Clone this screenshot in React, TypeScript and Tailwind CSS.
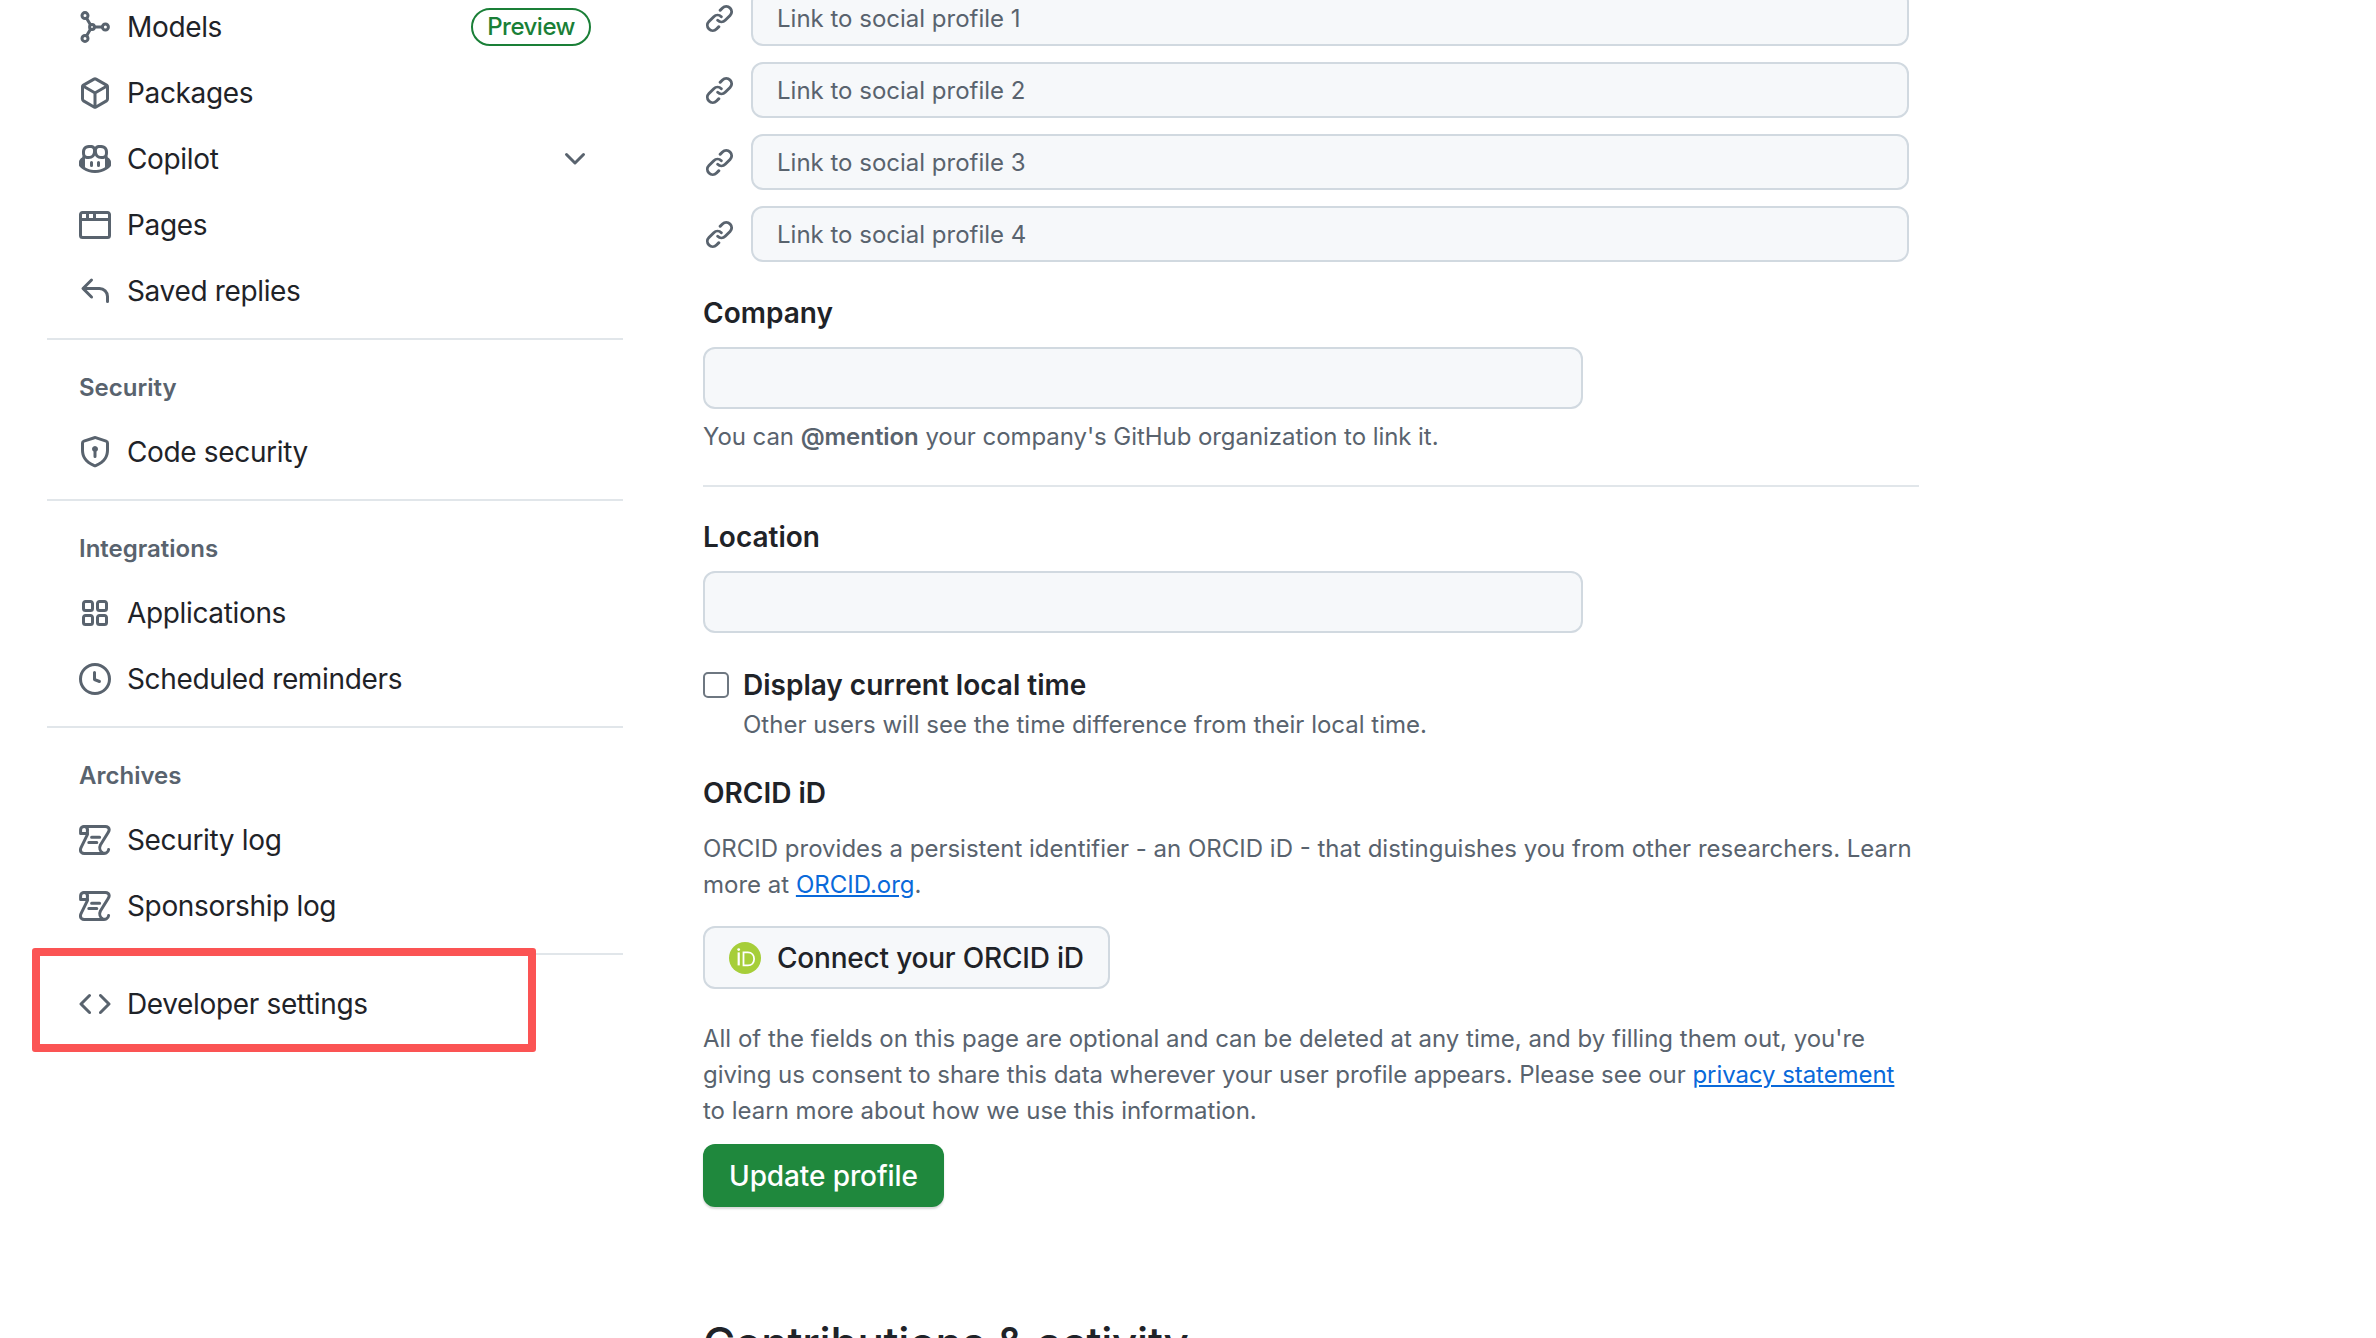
import type { ReactNode } from "react";

const d = {
  package: "m8.878.392 5.25 3.045c.54.314.872.89.872 1.514v6.098a1.75 1.75 0 0 1-.872 1.514l-5.25 3.045a1.75 1.75 0 0 1-1.756 0l-5.25-3.045A1.75 1.75 0 0 1 1 11.049V4.951c0-.624.332-1.201.872-1.514L7.122.392a1.75 1.75 0 0 1 1.756 0ZM7.875 1.69l-4.63 2.685L8 7.133l4.755-2.758-4.63-2.685a.248.248 0 0 0-.25 0ZM2.5 5.677v5.372c0 .09.047.171.125.216l4.625 2.683V8.432Zm6.25 8.271 4.625-2.683a.25.25 0 0 0 .125-.216V5.677L8.75 8.432Z",
  copilot: "M7.998 15.035c-4.562 0-7.873-2.914-7.998-3.749V9.338c.085-.628.677-1.686 1.588-2.065.013-.07.024-.143.036-.218.029-.183.06-.384.126-.612-.201-.508-.254-1.084-.254-1.656 0-.87.128-1.769.693-2.484.579-.733 1.494-1.124 2.724-1.261 1.206-.134 2.262.034 2.944.765.05.053.096.108.139.165.044-.057.094-.112.143-.165.682-.731 1.738-.899 2.944-.765 1.23.137 2.145.528 2.724 1.261.566.715.693 1.614.693 2.484 0 .572-.053 1.148-.254 1.656.066.228.098.429.126.612.012.076.024.148.037.218.924.385 1.522 1.471 1.591 2.095v1.872c0 .766-3.351 3.795-8.002 3.795Zm0-1.485c2.28 0 4.584-1.11 5.002-1.433V7.862l-.023-.116c-.49.21-1.075.291-1.727.291-1.146 0-2.059-.327-2.71-.991A3.222 3.222 0 0 1 8 6.303a3.24 3.24 0 0 1-.544.743c-.65.664-1.563.991-2.71.991-.652 0-1.236-.081-1.727-.291l-.023.116v4.255c.419.323 2.722 1.433 5.002 1.433ZM6.762 2.83c-.193-.206-.637-.413-1.682-.297-1.019.113-1.479.404-1.713.7-.247.312-.369.789-.369 1.554 0 .793.129 1.171.308 1.371.162.181.519.379 1.442.379.853 0 1.339-.235 1.638-.54.315-.322.527-.827.617-1.553.117-.935-.037-1.395-.241-1.614Zm4.155-.297c-1.044-.116-1.488.091-1.681.297-.204.219-.359.679-.242 1.614.091.726.303 1.231.618 1.553.299.305.784.54 1.638.54.922 0 1.28-.198 1.442-.379.179-.2.308-.578.308-1.371 0-.765-.123-1.242-.37-1.554-.233-.296-.693-.587-1.713-.7Z M6.25 9.037a.75.75 0 0 1 .75.75v1.501a.75.75 0 0 1-1.5 0V9.787a.75.75 0 0 1 .75-.75Zm4.25.75v1.501a.75.75 0 0 1-1.5 0V9.787a.75.75 0 0 1 1.5 0Z",
  browser: "M0 2.75C0 1.784.784 1 1.75 1h12.5c.966 0 1.75.784 1.75 1.75v10.5A1.75 1.75 0 0 1 14.25 15H1.75A1.75 1.75 0 0 1 0 13.25ZM14.5 6h-13v7.25c0 .138.112.25.25.25h12.5a.25.25 0 0 0 .25-.25Zm-6-3.5v2h6v-1.75a.25.25 0 0 0-.25-.25ZM5 2.5v2h2v-2Zm-3.25 0a.25.25 0 0 0-.25.25V4.5h2v-2Z",
  reply: "M6.78 1.97a.75.75 0 0 1 0 1.06L3.81 6h6.44A4.75 4.75 0 0 1 15 10.75v2.5a.75.75 0 0 1-1.5 0v-2.5a3.25 3.25 0 0 0-3.25-3.25H3.81l2.97 2.97a.749.749 0 0 1-.326 1.275.749.749 0 0 1-.734-.215L1.47 7.28a.75.75 0 0 1 0-1.06l4.25-4.25a.75.75 0 0 1 1.06 0Z",
  shield: "m8.533.133 5.25 1.68A1.75 1.75 0 0 1 15 3.48V7c0 1.566-.32 3.182-1.303 4.682-.983 1.498-2.585 2.813-5.032 3.855a1.697 1.697 0 0 1-1.33 0c-2.447-1.042-4.049-2.357-5.032-3.855C1.32 10.182 1 8.566 1 7V3.48a1.75 1.75 0 0 1 1.217-1.667l5.25-1.68a1.748 1.748 0 0 1 1.066 0Zm-.61 1.429.001.001-5.25 1.68a.251.251 0 0 0-.174.237V7c0 1.36.275 2.666 1.057 3.859.784 1.194 2.121 2.342 4.366 3.298a.196.196 0 0 0 .154 0c2.245-.957 3.582-2.103 4.366-3.297C13.225 9.666 13.5 8.358 13.5 7V3.48a.25.25 0 0 0-.174-.238l-5.25-1.68a.25.25 0 0 0-.153 0ZM9.5 6.5c0 .536-.286 1.032-.75 1.3v2.45a.75.75 0 0 1-1.5 0V7.8A1.5 1.5 0 1 1 9.5 6.5Z",
  apps: "M1.5 3.25c0-.966.784-1.75 1.75-1.75h2.5c.966 0 1.75.784 1.75 1.75v2.5A1.75 1.75 0 0 1 5.75 7.5h-2.5A1.75 1.75 0 0 1 1.5 5.75Zm7 0c0-.966.784-1.75 1.75-1.75h2.5c.966 0 1.75.784 1.75 1.75v2.5a1.75 1.75 0 0 1-1.75 1.75h-2.5A1.75 1.75 0 0 1 8.5 5.75Zm-7 7c0-.966.784-1.75 1.75-1.75h2.5c.966 0 1.75.784 1.75 1.75v2.5a1.75 1.75 0 0 1-1.75 1.75h-2.5a1.75 1.75 0 0 1-1.75-1.75Zm7 0c0-.966.784-1.75 1.75-1.75h2.5c.966 0 1.75.784 1.75 1.75v2.5a1.75 1.75 0 0 1-1.75 1.75h-2.5a1.75 1.75 0 0 1-1.75-1.75ZM3.25 3a.25.25 0 0 0-.25.25v2.5c0 .138.112.25.25.25h2.5A.25.25 0 0 0 6 5.75v-2.5A.25.25 0 0 0 5.75 3Zm7 0a.25.25 0 0 0-.25.25v2.5c0 .138.112.25.25.25h2.5a.25.25 0 0 0 .25-.25v-2.5a.25.25 0 0 0-.25-.25Zm-7 7a.25.25 0 0 0-.25.25v2.5c0 .138.112.25.25.25h2.5a.25.25 0 0 0 .25-.25v-2.5a.25.25 0 0 0-.25-.25Zm7 0a.25.25 0 0 0-.25.25v2.5c0 .138.112.25.25.25h2.5a.25.25 0 0 0 .25-.25v-2.5a.25.25 0 0 0-.25-.25Z",
  clock: "M8 0a8 8 0 1 1 0 16A8 8 0 0 1 8 0ZM1.5 8a6.5 6.5 0 1 0 13 0 6.5 6.5 0 0 0-13 0Zm7-3.25v2.992l2.028.812a.75.75 0 0 1-.557 1.392l-2.5-1A.751.751 0 0 1 7 8.25v-3.5a.75.75 0 0 1 1.5 0Z",
  code: "m11.28 3.22 4.25 4.25a.75.75 0 0 1 0 1.06l-4.25 4.25a.749.749 0 0 1-1.275-.326.749.749 0 0 1 .215-.734L13.94 8l-3.72-3.72a.749.749 0 0 1 .326-1.275.749.749 0 0 1 .734.215Zm-6.56 0a.751.751 0 0 1 1.042.018.751.751 0 0 1 .018 1.042L2.06 8l3.72 3.72a.749.749 0 0 1-.326 1.275.749.749 0 0 1-.734-.215L.47 8.53a.75.75 0 0 1 0-1.06Z",
  chevron: "M12.78 5.22a.749.749 0 0 1 0 1.06l-4.25 4.25a.749.749 0 0 1-1.06 0L3.22 6.28a.749.749 0 1 1 1.06-1.06L8 8.939l3.72-3.719a.749.749 0 0 1 1.06 0Z",
  link: "m7.775 3.275 1.25-1.25a3.5 3.5 0 1 1 4.95 4.95l-2.5 2.5a3.5 3.5 0 0 1-4.95 0 .751.751 0 0 1 .018-1.042.751.751 0 0 1 1.042-.018 1.998 1.998 0 0 0 2.83 0l2.5-2.5a2.002 2.002 0 0 0-2.83-2.83l-1.25 1.25a.751.751 0 0 1-1.042-.018.751.751 0 0 1-.018-1.042Zm-4.69 9.64a1.998 1.998 0 0 0 2.83 0l1.25-1.25a.751.751 0 0 1 1.042.018.751.751 0 0 1 .018 1.042l-1.25 1.25a3.5 3.5 0 1 1-4.95-4.95l2.5-2.5a3.5 3.5 0 0 1 4.95 0 .751.751 0 0 1-.018 1.042.751.751 0 0 1-1.042.018 1.998 1.998 0 0 0-2.83 0l-2.5 2.5a1.998 1.998 0 0 0 0 2.83Z",
};

function Octicon({ path, className = "h-8 w-8" }: { path: string; className?: string }) {
  return (
    <svg viewBox="0 0 16 16" className={`${className} shrink-0 fill-[#59636e]`}>
      <path d={path} />
    </svg>
  );
}

function ModelsIcon() {
  return (
    <svg viewBox="0 0 16 16" className="h-8 w-8 shrink-0 fill-none stroke-[#59636e] stroke-[1.5]">
      <circle cx="3" cy="2.3" r="1.5" />
      <circle cx="3" cy="13.7" r="1.5" />
      <circle cx="13.2" cy="8" r="1.5" />
      <circle cx="6.5" cy="8" r="1.2" />
      <path d="M3.8 3.6 5.8 7M3.8 12.4 5.8 9M7.7 8h4" />
    </svg>
  );
}

function LogIcon() {
  return (
    <svg viewBox="0 0 16 16" className="h-8 w-8 shrink-0 fill-none stroke-[#59636e] stroke-[1.5]" strokeLinecap="round" strokeLinejoin="round">
      <path d="M4.2 2.8v2.5L1.5 10.8c-.5 1-.8 1.5-.8 2.1 0 1.1.8 1.9 1.9 1.9h9.7" />
      <path d="M2.6 1.2h10.6c1.1 0 1.9.8 1.9 1.7 0 .5-.3 1-.6 1.5L10.7 10.5c-.7 1.4-.2 3.1 1.1 3.9 1.2.6 2.8 0 3-1.6" />
      <path d="M4.2 2.8c0-.9-.7-1.6-1.6-1.6-1 0-1.8.8-1.8 1.7v1.9h3.4" />
      <path d="M6.3 6.6h4M4.9 9.2h4" />
    </svg>
  );
}

function NavRow({ icon, children, right }: { icon: ReactNode; children: ReactNode; right?: ReactNode }) {
  return (
    <div className="flex h-[66px] items-center gap-4 pl-8 pr-8 text-[28px] tracking-[-0.35px] text-[#1f2328]">
      {icon}
      <span className="flex-1">{children}</span>
      {right}
    </div>
  );
}

function Divider() {
  return <div className="h-0.5 bg-[#e1e6ea]" />;
}

function SectionLabel({ children }: { children: ReactNode }) {
  return <div className="mt-[30px] mb-[13px] pl-8 text-[24px] leading-9 font-semibold text-[#59636e]">{children}</div>;
}

function SocialInput({ n }: { n: number }) {
  return (
    <div className="flex items-center gap-4">
      <Octicon path={d.link} className="ml-px h-[31px] w-[31px]" />
      <div className="flex h-14 w-[1158px] items-center rounded-xl border-2 border-[#d1d9e0] bg-[#f6f8fa] px-6 pt-px text-[24px] text-[#59636e]">
        Link to social profile {n}
      </div>
    </div>
  );
}

function TextField() {
  return <div className="mt-4 h-[62px] w-[880px] rounded-xl border-2 border-[#d1d9e0] bg-[#f6f8fa]" />;
}

export default function App() {
  return (
    <div className="flex h-[1338px] overflow-hidden bg-white font-['Inter',sans-serif] antialiased">
      <aside className="mt-[-6px] ml-[47px] w-[576px] shrink-0">
        <NavRow
          icon={<ModelsIcon />}
          right={
            <span className="rounded-full border-2 border-[#1a7f37] px-[14px] text-[24px] leading-[34px] font-medium tracking-[-0.5px] text-[#1a7f37]">
              Preview
            </span>
          }
        >
          Models
        </NavRow>
        <NavRow icon={<Octicon path={d.package} />}>Packages</NavRow>
        <NavRow icon={<Octicon path={d.copilot} />} right={<Octicon path={d.chevron} />}>
          Copilot
        </NavRow>
        <NavRow icon={<Octicon path={d.browser} />}>Pages</NavRow>
        <NavRow icon={<Octicon path={d.reply} />}>Saved replies</NavRow>
        <div className="mt-[14px]">
          <Divider />
        </div>
        <SectionLabel>Security</SectionLabel>
        <NavRow icon={<Octicon path={d.shield} />}>Code security</NavRow>
        <div className="mt-[14px]">
          <Divider />
        </div>
        <SectionLabel>Integrations</SectionLabel>
        <NavRow icon={<Octicon path={d.apps} />}>Applications</NavRow>
        <NavRow icon={<Octicon path={d.clock} />}>Scheduled reminders</NavRow>
        <div className="mt-[14px]">
          <Divider />
        </div>
        <SectionLabel>Archives</SectionLabel>
        <NavRow icon={<LogIcon />}>Security log</NavRow>
        <NavRow icon={<LogIcon />}>Sponsorship log</NavRow>
        <div className="mt-[14px]">
          <Divider />
        </div>
        <div className="relative mt-4">
          <NavRow icon={<Octicon path={d.code} />}>Developer settings</NavRow>
          {/* red annotation round the row */}
          <div className="absolute top-[-23px] left-[-15px] h-[104px] w-[504px] rounded-[3px] border-[8px] border-[#fb5454]" />
        </div>
      </aside>

      <main className="mt-[-10px] ml-20 w-[1216px] shrink-0 text-[24px] text-[#59636e]">
        <div className="flex flex-col gap-4">
          {[1, 2, 3, 4].map((n) => (
            <SocialInput key={n} n={n} />
          ))}
        </div>

        <div className="mt-[33px] text-[28px] leading-9 font-semibold text-[#1f2328]">Company</div>
        <TextField />
        <p className="mt-[10px] leading-9 tracking-[-0.06px]">
          You can <span className="font-semibold">@mention</span> your company's GitHub organization to link it.
        </p>
        <div className="mt-[30px]">
          <Divider />
        </div>

        <div className="mt-8 text-[28px] leading-9 font-semibold text-[#1f2328]">Location</div>
        <TextField />

        <label className="mt-[34px] flex items-center gap-[14px] text-[28px] leading-9 font-semibold text-[#1f2328]">
          <span className="h-[26px] w-[26px] rounded-[5px] border-2 border-[#6e7781] bg-white" />
          Display current local time
        </label>
        <p className="mt-1 ml-10 leading-9">Other users will see the time difference from their local time.</p>

        <div className="mt-8 text-[28px] leading-9 font-semibold text-[#1f2328]">ORCID iD</div>
        <p className="mt-5 leading-9">
          ORCID provides a persistent identifier - an ORCID iD - that distinguishes you from other researchers. Learn
          more at <a className="text-[#0969da] underline">ORCID.org</a>.
        </p>
        <button className="mt-[23px] flex h-[63px] items-center gap-4 rounded-xl border-2 border-[#d1d9e0] bg-[#f6f8fa] px-6 text-[28px] font-medium tracking-[-0.2px] text-[#1f2328]">
          <svg viewBox="0 0 32 32" className="h-8 w-8 shrink-0">
            <circle cx="16" cy="16" r="16" fill="#a6ce39" />
            <rect x="8.6" y="10.4" width="2.2" height="13" fill="#fff" />
            <circle cx="9.7" cy="7.6" r="1.4" fill="#fff" />
            <path d="M14.5 10.4h4.4c3.9 0 6.2 2.8 6.2 6.5 0 3.8-2.4 6.5-6.2 6.5h-4.4Z" fill="none" stroke="#fff" strokeWidth="1.8" />
          </svg>
          Connect your ORCID iD
        </button>
        <p className="mt-8 leading-9">
          All of the fields on this page are optional and can be deleted at any time, and by filling them out, you're{" "}
          <span className="tracking-[-0.06px]">
            giving us consent to share this data wherever your user profile appears. Please see our{" "}
            <a className="text-[#0969da] underline">privacy statement</a>
          </span>{" "}
          to learn more about how we use this information.
        </p>
        <button className="mt-[15px] flex h-[63px] items-center rounded-xl bg-[#1f883d] px-[26px] text-[28px] font-medium tracking-[-0.1px] text-white shadow-[0_2px_2px_rgba(0,0,0,0.15)]">
          Update profile
        </button>
        <h2 className="mt-[106px] text-[44px] leading-[60px] font-medium tracking-[-0.25px] text-[#1f2328]">Contributions &amp; activity</h2>
      </main>
    </div>
  );
}
